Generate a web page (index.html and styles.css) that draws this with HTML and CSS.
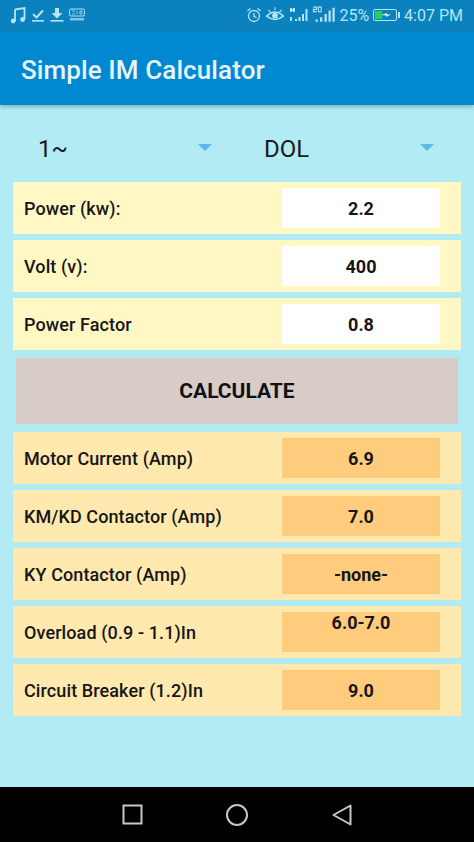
FILE: index.html
```html
<!DOCTYPE html>
<html>
<head>
    <title>Simple IM Calculator</title>
    <link rel="stylesheet" href="styles.css">
</head>
<body>
    <div class="phone">
        <div class="status-bar">
            <div class="status-left">
                <svg width="16" height="18" viewBox="0 0 16 18"><path d="M5 3.5 L14.5 2 V13" fill="none" stroke="#b3e5f5" stroke-width="1.8"/><path d="M5 3.5 V15" fill="none" stroke="#b3e5f5" stroke-width="1.8"/><circle cx="3.2" cy="15" r="2.4" fill="#b3e5f5"/><circle cx="12.6" cy="13.5" r="2.4" fill="#b3e5f5"/></svg>
                <svg width="14" height="16" viewBox="0 0 14 16"><path d="M2 7 L5.5 10.5 L12 3.5" fill="none" stroke="#b3e5f5" stroke-width="2"/><rect x="1" y="13" width="12" height="1.6" fill="#b3e5f5"/></svg>
                <svg width="14" height="16" viewBox="0 0 14 16"><path d="M5 1 H9 V6 H12.5 L7 11.5 L1.5 6 H5 Z" fill="#b3e5f5"/><rect x="0.5" y="13" width="13" height="1.6" fill="#b3e5f5"/></svg>
                <svg width="16" height="14" viewBox="0 0 16 14"><rect x="0.5" y="1" width="15" height="7" rx="1.5" fill="none" stroke="#b3e5f5"/><path d="M3 3 H6 M3 6 H6 M8 3 V6 M11 3 H13 V6 H11 Z" stroke="#b3e5f5" stroke-width="0.8" fill="none"/><rect x="1" y="10" width="14" height="2.5" fill="#b3e5f5" opacity="0.7"/></svg>
            </div>
            <div class="status-right">
                <svg width="16" height="16" viewBox="0 0 16 16"><circle cx="8" cy="9" r="5.5" fill="none" stroke="#b3e5f5" stroke-width="1.3"/><path d="M8 6 V9.5 L10.5 10.5 M1.5 4 L4.5 1.5 M14.5 4 L11.5 1.5" fill="none" stroke="#b3e5f5" stroke-width="1.3"/></svg>
                <svg width="20" height="18" viewBox="0 0 18 16"><path d="M1.5 9 Q9 1.5 16.5 9 Q9 15 1.5 9 Z" fill="none" stroke="#b3e5f5" stroke-width="1.3"/><circle cx="9" cy="8.5" r="2.6" fill="#b3e5f5"/><path d="M3 3.5 L5 5.5 M15 3.5 L13 5.5 M9 1 V3.5" stroke="#b3e5f5"/></svg>
                <svg width="21" height="16" viewBox="0 0 21 16"><path d="M3 1 V5 M6 1 V5 M3 3 H6 M3 10 V14 M8 12 V14 M11.5 10 V14 M15 7 V14 M18.5 2 V14" fill="none" stroke="#b3e5f5" stroke-width="2"/></svg>
                <svg width="24" height="18" viewBox="0 0 21 16"><path d="M1 1 H4 V3 H1 V5 H4 M5.5 1 H8 V5 H5.5 Z" fill="none" stroke="#b3e5f5" stroke-width="0.9"/><path d="M4 12 V14 M8 10 V14 M12 7 V14 M15.5 4 V14 M19 1.5 V14" fill="none" stroke="#b3e5f5" stroke-width="2"/></svg>
                <span class="battery-text">25%</span>
                <svg width="27" height="14" viewBox="0 0 27 14"><rect x="0.5" y="1.5" width="23" height="11" rx="1.5" fill="none" stroke="#b3e5f5"/><rect x="2" y="3" width="7" height="8" fill="#22d64a"/><path d="M8 7 L14 5 V6.5 H18 L13 9 V7.5 Z" fill="#d8f2fa"/><rect x="25" y="4" width="2" height="6" fill="#b3e5f5"/></svg>
                <span class="clock">4:07 PM</span>
            </div>
        </div>
        <div class="app-bar">Simple IM Calculator</div>

        <div class="content">
            <div class="spinners">
                <div class="spinner spinner-phase">
                    <span>1~</span>
                    <span class="arrow"></span>
                </div>
                <div class="spinner spinner-mode">
                    <span>DOL</span>
                    <span class="arrow"></span>
                </div>
            </div>

            <div class="rows">
                <div class="row input-row"><span class="label">Power (kw):</span><span class="value">2.2</span></div>
                <div class="row input-row"><span class="label">Volt (v):</span><span class="value">400</span></div>
                <div class="row input-row"><span class="label">Power Factor</span><span class="value">0.8</span></div>
            </div>

            <button class="calculate">CALCULATE</button>

            <div class="rows">
                <div class="row result-row"><span class="label">Motor Current (Amp)</span><span class="value">6.9</span></div>
                <div class="row result-row"><span class="label">KM/KD Contactor (Amp)</span><span class="value">7.0</span></div>
                <div class="row result-row"><span class="label">KY Contactor (Amp)</span><span class="value">-none-</span></div>
                <div class="row result-row"><span class="label">Overload (0.9 - 1.1)In</span><span class="value value-top">6.0-7.0</span></div>
                <div class="row result-row"><span class="label">Circuit Breaker (1.2)In</span><span class="value">9.0</span></div>
            </div>
        </div>

        <div class="nav-bar">
            <svg width="22" height="22" viewBox="0 0 22 22"><rect x="1.5" y="1.5" width="18" height="18" fill="none" stroke="#c8c8c8" stroke-width="2"/></svg>
            <svg width="24" height="24" viewBox="0 0 24 24"><circle cx="12" cy="12" r="10" fill="none" stroke="#c8c8c8" stroke-width="2"/></svg>
            <svg width="22" height="24" viewBox="0 0 22 24"><path d="M20.5 2.5 V21.5 L3.5 12 Z" fill="none" stroke="#c8c8c8" stroke-width="2" stroke-linejoin="round"/></svg>
        </div>
    </div>
</body>
</html>
```

FILE: styles.css
```css
* {
    margin: 0;
    padding: 0;
    box-sizing: border-box;
}

body {
    font-family: Roboto, 'Liberation Sans', sans-serif;
    background-color: #b2ebf4;
}

.phone {
    width: 474px;
    height: 842px;
    display: flex;
    flex-direction: column;
    overflow: hidden;
}

.status-bar {
    height: 32px;
    background-color: #0b82bd;
    display: flex;
    justify-content: space-between;
    align-items: center;
    padding: 0 11px 2px 10px;
    flex-shrink: 0;
}

.status-left,
.status-right {
    display: flex;
    align-items: center;
}

.status-left {
    gap: 5px;
}

.status-right {
    gap: 3px;
    color: #b3e5f5;
    font-size: 16px;
}

.battery-text {
    margin-right: 1px;
}

.clock {
    margin-left: 1px;
}

.app-bar {
    height: 73px;
    background-color: #0288d1;
    color: #e6f5fb;
    font-size: 26px;
    font-weight: 500;
    letter-spacing: 0.1px;
    display: flex;
    align-items: center;
    padding: 2px 0 0 21px;
    box-shadow: 0 2px 4px rgba(0, 0, 0, 0.25);
    flex-shrink: 0;
}

.content {
    flex: 1;
    padding: 0 13px;
}

.spinners {
    height: 77px;
    display: flex;
}

.spinner {
    display: flex;
    align-items: center;
    justify-content: space-between;
    font-size: 24px;
    color: #1a1a1a;
    padding-top: 10px;
}

.spinner-phase {
    width: 199px;
    padding-left: 25px;
}

.spinner-mode {
    width: 201px;
    margin-left: 21px;
    padding-left: 31px;
}

.arrow {
    width: 0;
    height: 0;
    border-left: 7px solid transparent;
    border-right: 7px solid transparent;
    border-top: 7px solid #5bb8e8;
    margin-bottom: 3px;
}

.rows {
    display: flex;
    flex-direction: column;
    gap: 6px;
}

.row {
    height: 52px;
    display: flex;
    align-items: center;
    justify-content: space-between;
    padding: 0 21px 0 11px;
}

.input-row {
    background-color: #fff8c4;
}

.result-row {
    background-color: #ffe9ae;
}

.label {
    font-size: 18px;
    font-weight: 500;
    letter-spacing: 0.1px;
    color: #161616;
}

.value {
    width: 158px;
    height: 40px;
    display: flex;
    align-items: center;
    justify-content: center;
    font-size: 18px;
    font-weight: 700;
    color: #161616;
}

.input-row .value {
    background-color: #ffffff;
}

.result-row .value {
    background-color: #ffcb7d;
}

.value-top {
    align-items: flex-start;
}

.calculate {
    display: block;
    width: 442px;
    height: 66px;
    margin: 8px 0 8px 3px;
    border: none;
    background-color: #d7ccc8;
    color: #111111;
    font-family: Roboto, 'Liberation Sans', sans-serif;
    font-size: 21px;
    font-weight: 700;
}

.nav-bar {
    height: 55px;
    background-color: #000000;
    display: flex;
    align-items: center;
    justify-content: center;
    gap: 81px;
    flex-shrink: 0;
}
```
